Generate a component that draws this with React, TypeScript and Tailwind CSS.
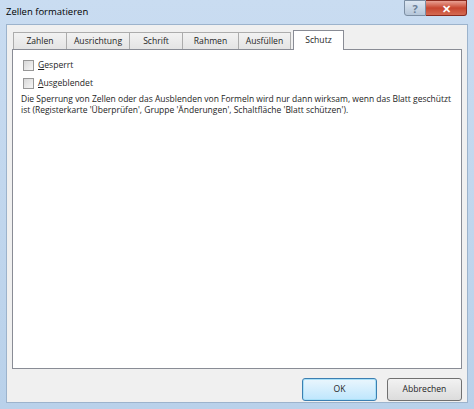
import { useState } from "react";

const tabs = ["Zahlen", "Ausrichtung", "Schrift", "Rahmen", "Ausfüllen", "Schutz"];
const tabWidths = ["w-[54px]", "w-[64px]", "w-[54px]", "w-[57px]", "w-[53px]", "w-[51px]"];

function Check({ label, accel }: { label: string; accel: string }) {
  const [on, setOn] = useState(false);
  return (
    <label className="flex items-center gap-[4px] h-[16px] pl-[2px] cursor-default select-none" onClick={() => setOn(!on)}>
      <span className="w-[11px] h-[11px] border border-[#979797] bg-gradient-to-br from-[#d8d8d8] to-[#f6f6f6] flex items-center justify-center text-[9px] leading-none">
        {on ? "✓" : ""}
      </span>
      <span>
        <span className="underline">{accel}</span>
        {label.slice(accel.length)}
      </span>
    </label>
  );
}

export default function App() {
  return (
    <div className="w-[474px] h-[409px] bg-gradient-to-b from-[#c9dcf1] to-[#b9d1ea] flex flex-col font-['Open_Sans',sans-serif] text-[8.6px] text-[#1e1e1e] overflow-hidden">
      <div className="h-[24px] flex items-start justify-between pl-[6px] pr-[7px]">
        <span className="text-[9.5px] mt-[5px] text-black">Zellen formatieren</span>
        <div className="flex">
          <button className="w-[22px] h-[16px] rounded-bl-[3px] border border-[#7c8ea3] bg-gradient-to-b from-[#dde7f2] to-[#b5c6d9] text-[#6b7f96] text-[11px] leading-none font-bold">
            ?
          </button>
          <button className="w-[41px] h-[16px] rounded-br-[3px] border border-[#8a2a1e] border-l-0 bg-gradient-to-b from-[#e8a093] via-[#c7452f] to-[#d46a52] text-white text-[11px] leading-none font-bold">
            ✕
          </button>
        </div>
      </div>
      <div className="flex-1 mx-[6px] mb-[6px] bg-[#f0f0f0] border border-[#9cb3cc] flex flex-col px-[5px] pt-[5px]">
        <div className="flex items-end h-[19px] pl-[1px]">
          {tabs.map((t, i) =>
            t === "Schutz" ? (
              <div key={t} className={`${tabWidths[i]} ml-[2px] h-[20px] bg-white border border-[#898c95] border-b-0 flex items-center justify-center -mb-[1px] relative z-10`}>
                {t}
              </div>
            ) : (
              <div key={t} className={`${tabWidths[i]} h-[17px] bg-gradient-to-b from-[#f2f2f2] to-[#e4e4e4] border border-[#acacac] border-b-0 -ml-[1px] first:ml-0 flex items-center justify-center`}>
                {t}
              </div>
            )
          )}
        </div>
        <div className="h-[320px] bg-white border border-[#898c95] pl-[8px] pr-[4px] pt-[7px] flex flex-col">
          <Check label="Gesperrt" accel="G" />
          <div className="h-[2px]" />
          <Check label="Ausgeblendet" accel="A" />
          <p className="mt-[2px] leading-[11px] text-[8.5px]">
            Die Sperrung von Zellen oder das Ausblenden von Formeln wird nur dann wirksam, wenn das Blatt geschützt ist (Registerkarte 'Überprüfen', Gruppe 'Änderungen', Schaltfläche 'Blatt schützen').
          </p>
        </div>
        <div className="flex justify-end gap-[10px] mt-[9px]">
          <button className="w-[75px] h-[23px] rounded-[3px] border border-[#3c7fb1] bg-gradient-to-b from-[#eaf6fd] to-[#bee6fd] shadow-[inset_0_0_0_1px_#a8e0f8]">
            OK
          </button>
          <button className="w-[75px] h-[23px] rounded-[3px] border border-[#707070] bg-gradient-to-b from-[#f2f2f2] to-[#dcdcdc]">
            Abbrechen
          </button>
        </div>
      </div>
    </div>
  );
}
